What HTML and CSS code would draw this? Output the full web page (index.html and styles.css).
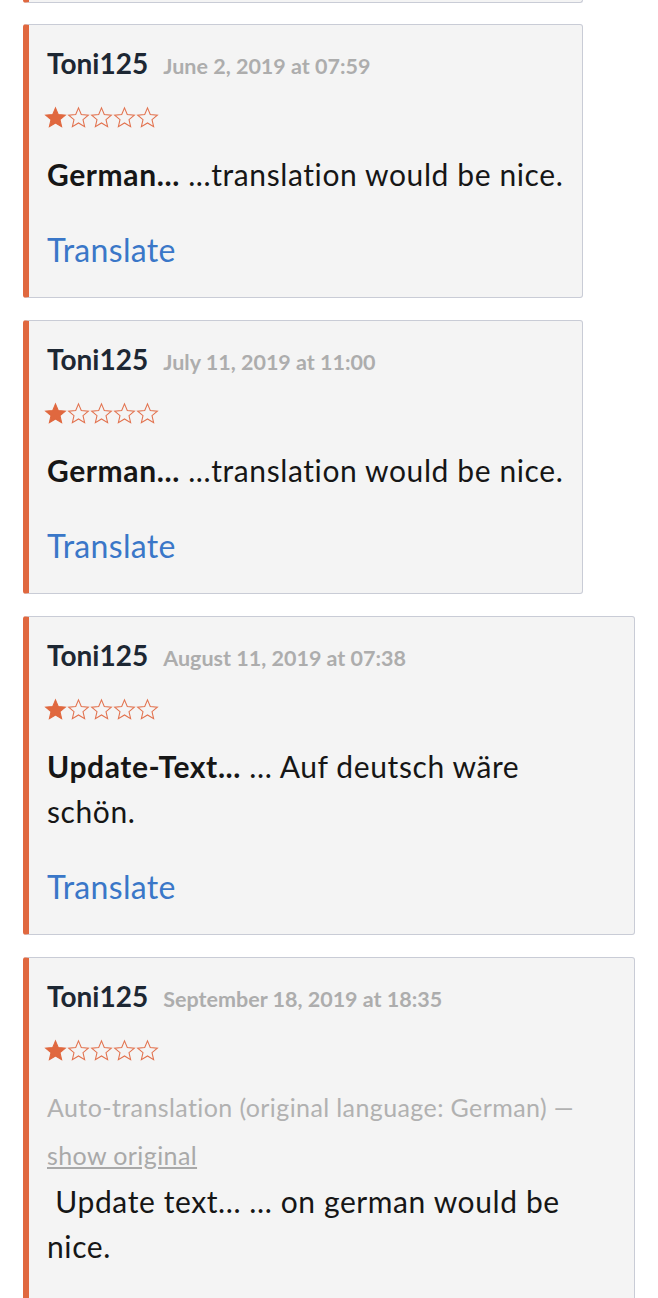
FILE: index.html
```html
<!DOCTYPE html>
<html lang="en">
<head>
    <meta charset="UTF-8">
    <title>Reviews</title>
    <link rel="stylesheet" href="styles.css">
</head>
<body>
    <div class="feed">
        <div class="card card-tail"></div>

        <div class="card">
            <div class="review-head">
                <span class="author">Toni125</span>
                <span class="date">June 2, 2019 at 07:59</span>
            </div>
            <div class="stars">
                <svg class="star filled" viewBox="0 0 24 24"><polygon points="12,2 14.9,8.9 22.3,9.5 16.7,14.3 18.4,21.6 12,17.7 5.6,21.6 7.3,14.3 1.7,9.5 9.1,8.9"/></svg>
                <svg class="star" viewBox="0 0 24 24"><polygon points="12,2 14.9,8.9 22.3,9.5 16.7,14.3 18.4,21.6 12,17.7 5.6,21.6 7.3,14.3 1.7,9.5 9.1,8.9"/></svg>
                <svg class="star" viewBox="0 0 24 24"><polygon points="12,2 14.9,8.9 22.3,9.5 16.7,14.3 18.4,21.6 12,17.7 5.6,21.6 7.3,14.3 1.7,9.5 9.1,8.9"/></svg>
                <svg class="star" viewBox="0 0 24 24"><polygon points="12,2 14.9,8.9 22.3,9.5 16.7,14.3 18.4,21.6 12,17.7 5.6,21.6 7.3,14.3 1.7,9.5 9.1,8.9"/></svg>
                <svg class="star" viewBox="0 0 24 24"><polygon points="12,2 14.9,8.9 22.3,9.5 16.7,14.3 18.4,21.6 12,17.7 5.6,21.6 7.3,14.3 1.7,9.5 9.1,8.9"/></svg>
            </div>
            <p class="review-text"><strong>German...</strong> ...translation would be nice.</p>
            <a class="translate" href="#">Translate</a>
        </div>

        <div class="card">
            <div class="review-head">
                <span class="author">Toni125</span>
                <span class="date">July 11, 2019 at 11:00</span>
            </div>
            <div class="stars">
                <svg class="star filled" viewBox="0 0 24 24"><polygon points="12,2 14.9,8.9 22.3,9.5 16.7,14.3 18.4,21.6 12,17.7 5.6,21.6 7.3,14.3 1.7,9.5 9.1,8.9"/></svg>
                <svg class="star" viewBox="0 0 24 24"><polygon points="12,2 14.9,8.9 22.3,9.5 16.7,14.3 18.4,21.6 12,17.7 5.6,21.6 7.3,14.3 1.7,9.5 9.1,8.9"/></svg>
                <svg class="star" viewBox="0 0 24 24"><polygon points="12,2 14.9,8.9 22.3,9.5 16.7,14.3 18.4,21.6 12,17.7 5.6,21.6 7.3,14.3 1.7,9.5 9.1,8.9"/></svg>
                <svg class="star" viewBox="0 0 24 24"><polygon points="12,2 14.9,8.9 22.3,9.5 16.7,14.3 18.4,21.6 12,17.7 5.6,21.6 7.3,14.3 1.7,9.5 9.1,8.9"/></svg>
                <svg class="star" viewBox="0 0 24 24"><polygon points="12,2 14.9,8.9 22.3,9.5 16.7,14.3 18.4,21.6 12,17.7 5.6,21.6 7.3,14.3 1.7,9.5 9.1,8.9"/></svg>
            </div>
            <p class="review-text"><strong>German...</strong> ...translation would be nice.</p>
            <a class="translate" href="#">Translate</a>
        </div>

        <div class="card card-wide">
            <div class="review-head">
                <span class="author">Toni125</span>
                <span class="date">August 11, 2019 at 07:38</span>
            </div>
            <div class="stars">
                <svg class="star filled" viewBox="0 0 24 24"><polygon points="12,2 14.9,8.9 22.3,9.5 16.7,14.3 18.4,21.6 12,17.7 5.6,21.6 7.3,14.3 1.7,9.5 9.1,8.9"/></svg>
                <svg class="star" viewBox="0 0 24 24"><polygon points="12,2 14.9,8.9 22.3,9.5 16.7,14.3 18.4,21.6 12,17.7 5.6,21.6 7.3,14.3 1.7,9.5 9.1,8.9"/></svg>
                <svg class="star" viewBox="0 0 24 24"><polygon points="12,2 14.9,8.9 22.3,9.5 16.7,14.3 18.4,21.6 12,17.7 5.6,21.6 7.3,14.3 1.7,9.5 9.1,8.9"/></svg>
                <svg class="star" viewBox="0 0 24 24"><polygon points="12,2 14.9,8.9 22.3,9.5 16.7,14.3 18.4,21.6 12,17.7 5.6,21.6 7.3,14.3 1.7,9.5 9.1,8.9"/></svg>
                <svg class="star" viewBox="0 0 24 24"><polygon points="12,2 14.9,8.9 22.3,9.5 16.7,14.3 18.4,21.6 12,17.7 5.6,21.6 7.3,14.3 1.7,9.5 9.1,8.9"/></svg>
            </div>
            <p class="review-text"><strong>Update-Text...</strong> ... Auf deutsch wäre schön.</p>
            <a class="translate" href="#">Translate</a>
        </div>

        <div class="card card-wide">
            <div class="review-head">
                <span class="author">Toni125</span>
                <span class="date">September 18, 2019 at 18:35</span>
            </div>
            <div class="stars">
                <svg class="star filled" viewBox="0 0 24 24"><polygon points="12,2 14.9,8.9 22.3,9.5 16.7,14.3 18.4,21.6 12,17.7 5.6,21.6 7.3,14.3 1.7,9.5 9.1,8.9"/></svg>
                <svg class="star" viewBox="0 0 24 24"><polygon points="12,2 14.9,8.9 22.3,9.5 16.7,14.3 18.4,21.6 12,17.7 5.6,21.6 7.3,14.3 1.7,9.5 9.1,8.9"/></svg>
                <svg class="star" viewBox="0 0 24 24"><polygon points="12,2 14.9,8.9 22.3,9.5 16.7,14.3 18.4,21.6 12,17.7 5.6,21.6 7.3,14.3 1.7,9.5 9.1,8.9"/></svg>
                <svg class="star" viewBox="0 0 24 24"><polygon points="12,2 14.9,8.9 22.3,9.5 16.7,14.3 18.4,21.6 12,17.7 5.6,21.6 7.3,14.3 1.7,9.5 9.1,8.9"/></svg>
                <svg class="star" viewBox="0 0 24 24"><polygon points="12,2 14.9,8.9 22.3,9.5 16.7,14.3 18.4,21.6 12,17.7 5.6,21.6 7.3,14.3 1.7,9.5 9.1,8.9"/></svg>
            </div>
            <p class="auto-note">Auto-translation (original language: German) — <a href="#">show original</a></p>
            <p class="review-text review-text-translated">&nbsp;Update text... ... on german would be nice.</p>
            <a class="translate" href="#">Translate</a>
        </div>
    </div>
</body>
</html>
```

FILE: styles.css
```css
/* Review feed */
body {
    font-family: 'Lato', 'Open Sans', sans-serif;
    font-variant-ligatures: none;
    background-color: #fff;
    color: #1b1b1b;
    margin: 0;
    padding: 0;
}

.feed {
    display: flex;
    flex-direction: column;
    align-items: flex-start;
    gap: 22px;
    padding: 0 23px;
}

.card {
    box-sizing: border-box;
    width: 560px;
    padding: 20px 16px 25px 18px;
    background-color: #f4f4f4;
    border: 1px solid #c9ccd6;
    border-left: 6px solid #e0683f;
    border-radius: 3px;
}

.card-wide {
    width: 612px;
    padding-right: 30px;
}

/* bottom edge of the card scrolled out above */
.card-tail {
    height: 3px;
    padding: 0;
    border-top: none;
    border-radius: 0 0 3px 3px;
    margin-bottom: -1px;
}

.review-head {
    font-size: 28px;
    line-height: 36px;
    white-space: nowrap;
}

.author {
    font-weight: 700;
    color: #1d2733;
    margin-right: 8px;
}

.date {
    font-size: 21.5px;
    line-height: 1;
    font-weight: 700;
    color: #adadad;
}

.stars {
    display: flex;
    margin-top: 25px;
    margin-left: -3px;
}

.star {
    width: 23px;
    height: 23px;
    fill: none;
    stroke: #e2714d;
    stroke-width: 1.1;
}

.star.filled {
    fill: #e0683f;
    stroke: #e0683f;
}

.review-text {
    margin: 23px 0 0 0;
    font-size: 30px;
    letter-spacing: 0.6px;
    line-height: 45px;
    color: #161616;
}

.review-text strong {
    font-weight: 700;
}

.review-text-translated {
    margin-top: 0;
}

.auto-note {
    margin: 21px 0 0 0;
    font-size: 25px;
    letter-spacing: 0.4px;
    line-height: 48px;
    color: #b1b1b1;
}

.auto-note a {
    color: #a9a9a9;
    text-decoration: underline;
}

.translate {
    display: block;
    margin-top: 30px;
    font-size: 32px;
    letter-spacing: 0.3px;
    line-height: 45px;
    color: #3a77c8;
    text-decoration: none;
}
```
